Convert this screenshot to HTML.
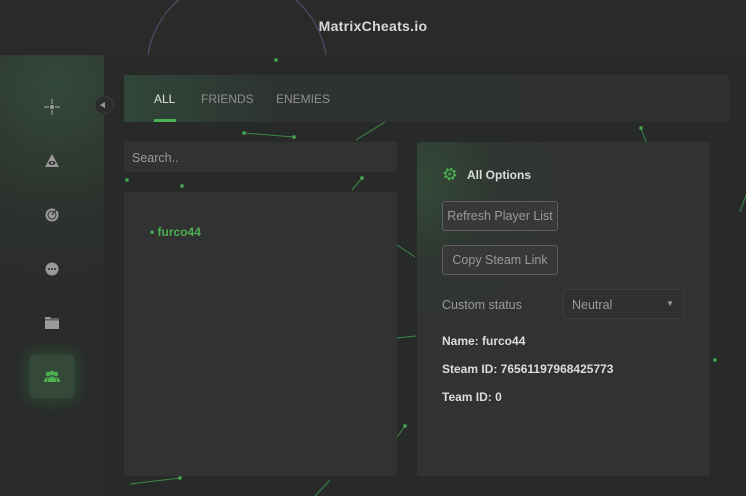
<!DOCTYPE html>
<html><head><meta charset="utf-8"><style>
*{margin:0;padding:0;box-sizing:border-box}
body{width:746px;height:496px;overflow:hidden;background:#282929;font-family:"Liberation Sans",sans-serif;position:relative}
.hdr{position:absolute;left:0;top:0;width:746px;height:55px;background:#2a2a28}
.title{position:absolute;left:0;width:746px;top:18px;text-align:center;color:#d8d8d8;font-weight:bold;font-size:14px;letter-spacing:.3px}
.side{position:absolute;left:0;top:55px;width:104px;height:441px;background:radial-gradient(circle at 55px 30px,#33493a 0,#2f3b32 70px,#2c312d 130px,#2a2b2b 220px)}
.ic{position:absolute;left:42px;width:20px;height:20px;color:#9a9a9a}
.act{position:absolute;left:30px;top:300px;width:44px;height:43px;border-radius:4px;background:#35493a;box-shadow:0 0 18px #2f5a37}
.tabs{position:absolute;left:124px;top:75px;width:605px;height:47px;background:linear-gradient(90deg,#30473a,#2e3330 150px,#2f3030)}
.tab{position:absolute;top:17px;font-size:12px;color:#8f8f8f}
.panel{position:absolute;background:#313232;border-radius:2px}
.btn{position:absolute;left:442px;width:116px;height:30px;border:1px solid #5e5e5e;border-radius:3px;background:#383838;color:#9a9a9a;font-size:12.5px;text-align:center;line-height:28px;white-space:nowrap}
.lbl{position:absolute;left:442px;color:#dcdcdc;font-size:12px;font-weight:bold}
</style></head><body>
<div class="hdr">
<svg width="746" height="55" style="position:absolute;left:0;top:0"><path d="M148 55 A90 90 0 0 1 326 55" fill="none" stroke="#4a4e6a" stroke-width="1.2"/></svg>
<div class="title">MatrixCheats.io</div></div>
<div class="side">
<svg class="ic" style="top:42px" viewBox="0 0 20 20" fill="#9a9a9a"><circle cx="10" cy="10" r="2"/><rect x="9.4" y="2" width="1.2" height="5"/><rect x="9.4" y="13" width="1.2" height="5"/><rect x="2" y="9.4" width="5" height="1.2"/><rect x="13" y="9.4" width="5" height="1.2"/></svg>
<svg class="ic" style="top:96px" viewBox="0 0 20 20"><path d="M10 3 L17 16 H3Z" fill="#9a9a9a"/><ellipse cx="10" cy="12" rx="3.5" ry="2" fill="#2c302d"/><circle cx="10" cy="12" r="1.2" fill="#9a9a9a"/></svg>
<svg class="ic" style="top:150px" viewBox="0 0 20 20"><circle cx="10" cy="10" r="6.5" fill="#9a9a9a"/><circle cx="10" cy="10" r="4" fill="none" stroke="#2b2f2c" stroke-width="1"/><path d="M10 10 L14 5" stroke="#2b2f2c" stroke-width="1.3"/></svg>
<svg class="ic" style="top:204px" viewBox="0 0 20 20"><circle cx="10" cy="10" r="6.5" fill="#9a9a9a"/><circle cx="7" cy="10" r="1" fill="#2b2b2b"/><circle cx="10" cy="10" r="1" fill="#2b2b2b"/><circle cx="13" cy="10" r="1" fill="#2b2b2b"/></svg>
<svg class="ic" style="top:258px" viewBox="0 0 20 20"><path d="M3 4 H8 L9 5.5 H17 V16 H3Z" fill="#9a9a9a"/><rect x="3" y="6.5" width="14" height=".8" fill="#2b2b2b"/></svg>
<div class="act"></div>
<svg class="ic" style="top:312px;left:42px" viewBox="0 0 20 20" fill="#4caf50"><circle cx="6" cy="7" r="2.3"/><circle cx="10" cy="6" r="2.5"/><circle cx="14" cy="7" r="2.3"/><path d="M2 15 C2 11 5 10 7 10 C5 11 5 13 5 15Z M18 15 C18 11 15 10 13 10 C15 11 15 13 15 15Z M5.5 15 C5.5 11 8 9.5 10 9.5 C12 9.5 14.5 11 14.5 15Z"/></svg>
</div>
<svg width="20" height="20" style="position:absolute;left:94px;top:95px"><circle cx="10" cy="10" r="9" fill="#2b2c2c" stroke="#3a3b3b"/><path d="M6 10 L11 7 V13Z" fill="#9a9a9a"/></svg>
<div class="tabs">
<div class="tab" style="left:30px;color:#e0e0e0">ALL</div>
<div style="position:absolute;left:30px;top:44px;width:22px;height:3px;background:#4caf50"></div>
<div class="tab" style="left:77px">FRIENDS</div>
<div class="tab" style="left:152px">ENEMIES</div>
</div>
<svg width="746" height="496" style="position:absolute;left:0;top:0" stroke="#3d8a48" stroke-width="1" fill="#4caf50">
<path d="M244 133 L294 137 M356 140 L385 122 M362 178 L352 190 M397 245 L415 257 M397 338 L416 336 M405 426 L395 440 M130 484 L180 478 M315 496 L330 480 M740 212 L746 195 M641 128 L646 142" fill="none"/>
<circle cx="244" cy="133" r="1.5"/><circle cx="294" cy="137" r="1.5"/><circle cx="182" cy="186" r="1.5"/><circle cx="127" cy="180" r="1.5"/><circle cx="362" cy="178" r="1.5"/><circle cx="405" cy="426" r="1.5"/><circle cx="715" cy="360" r="1.5"/><circle cx="641" cy="128" r="1.5"/><circle cx="180" cy="478" r="1.5"/><circle cx="276" cy="60" r="1.5"/>
</svg>
<div class="panel" style="left:124px;top:142px;width:273px;height:30px"></div>
<div style="position:absolute;left:132px;top:151px;color:#9a9a9a;font-size:12.5px">Search..</div>
<div class="panel" style="left:124px;top:192px;width:273px;height:284px"></div>
<div style="position:absolute;left:150px;top:225px;color:#4caf50;font-size:12px;font-weight:bold">• furco44</div>
<div class="panel" style="left:417px;top:142px;width:293px;height:334px;background:radial-gradient(circle at 0 40px,#334a39 0,#2f3631 80px,#313232 160px)"></div>
<svg width="14" height="14" style="position:absolute;left:443px;top:167px"><circle cx="7" cy="7" r="5" fill="none" stroke="#4caf50" stroke-width="2.6" stroke-dasharray="2.2 1.7"/><circle cx="7" cy="7" r="4.2" fill="none" stroke="#4caf50" stroke-width="1.2"/><path d="M5.6 5 L9 7 L5.6 9Z" fill="#4caf50"/></svg>
<div class="lbl" style="top:168px;left:467px">All Options</div>
<div class="btn" style="top:201px">Refresh Player List</div>
<div class="btn" style="top:245px">Copy Steam Link</div>
<div style="position:absolute;left:442px;top:298px;color:#9a9a9a;font-size:12.5px">Custom status</div>
<div style="position:absolute;left:563px;top:289px;width:121px;height:30px;border:1px solid #3c3d3d;border-radius:3px;background:#2f3030;color:#9a9a9a;font-size:12.5px;padding:8px 0 0 8px">Neutral<span style="position:absolute;right:9px;top:9px;font-size:8px">▼</span></div>
<div class="lbl" style="top:334px">Name: furco44</div>
<div class="lbl" style="top:362px">Steam ID: 76561197968425773</div>
<div class="lbl" style="top:390px">Team ID: 0</div>
</body></html>
